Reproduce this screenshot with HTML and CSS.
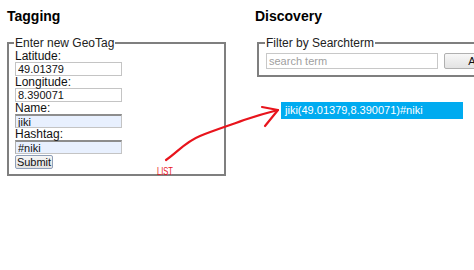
FILE: index.html
```html
<!DOCTYPE html>
<html lang="en">
<head>
    <meta charset="UTF-8">
    <title>GeoTag App</title>
    <link rel="stylesheet" href="styles.css">
</head>
<body>
    <div class="page">
        <section class="tagging">
            <h2>Tagging</h2>
            <fieldset class="tag-form">
                <legend>Enter new GeoTag</legend>
                <label for="lat">Latitude:</label>
                <input id="lat" class="field" type="text" value="49.01379">
                <label for="lon">Longitude:</label>
                <input id="lon" class="field" type="text" value="8.390071">
                <label for="name">Name:</label>
                <input id="name" class="field filled" type="text" value="jiki">
                <label for="tag">Hashtag:</label>
                <input id="tag" class="field filled" type="text" value="#niki">
                <button class="submit-btn" type="button">Submit</button>
            </fieldset>
        </section>

        <section class="discovery">
            <h2>Discovery</h2>
            <fieldset class="filter">
                <legend>Filter by Searchterm</legend>
                <div class="filter-row">
                    <input class="search" type="text" placeholder="search term">
                    <button class="apply-btn" type="button">Apply</button>
                </div>
            </fieldset>
            <ul class="results">
                <li>jiki(49.01379,8.390071)#niki</li>
            </ul>
        </section>
    </div>

    <!-- hand-drawn annotation -->
    <svg class="note" width="474" height="270" viewBox="0 0 474 270">
        <path d="M166 160 C178 152 185 142 200 136 C215 130 228 126 244 120 C256 116 266 113 278 110"
              fill="none" stroke="#e8141c" stroke-width="2.2" stroke-linecap="round"/>
        <path d="M262 107 L278 110 L265 126" fill="none" stroke="#e8141c" stroke-width="2.2"
              stroke-linecap="round" stroke-linejoin="round"/>
        <text x="157" y="175" textLength="16" lengthAdjust="spacingAndGlyphs" class="note-text">LIST</text>
    </svg>
</body>
</html>
```

FILE: styles.css
```css
body { font-family: "Liberation Sans", Arial, sans-serif; font-size: 12px; margin: 0; background: #fff; color: #000; overflow: hidden; }
.page { display: grid; grid-template-columns: 248px 1fr; padding-left: 7px; }
h2 { font-size: 14px; line-height: 18px; margin: 7px 0 11px; font-weight: bold; }

fieldset { border: 2px solid #7f7f7f; margin: 0; padding: 0 6px 5px 6px; min-width: 0; }
legend { font-size: 12px; line-height: 14px; padding: 0 1px; margin-left: -1px; color: #222; }

.tag-form { width: 219px; box-sizing: border-box; }
.tag-form label { display: block; line-height: 12px; height: 12px; color: #111; }
.field { display: block; box-sizing: border-box; width: 107px; height: 14px; margin: 0; padding: 0 2px; font: 11px "Liberation Sans", Arial, sans-serif; border: 1px solid #c4c4c4; background: #fff; color: #111; }
.field.filled { background: #e8f0fe; border-top: 2px solid #8d8d8d; border-left-color: #b0b0b0; }
.submit-btn { display: block; margin-top: 1px; height: 14px; width: 38px; padding: 0; font: 11px "Liberation Sans", Arial, sans-serif; line-height: 12px; background: linear-gradient(#f6f6f6, #e2e2e2); border: 1px solid #8f9fb8; border-radius: 2px; color: #111; }

.filter { width: 300px; margin-left: 2px; padding: 3px 8px 6px 7px; }
.filter-row { display: flex; gap: 6px; }
.search { flex: none; box-sizing: border-box; width: 172px; height: 16px; margin: 0; padding: 0 2px; font: 11px "Liberation Sans", Arial, sans-serif; border: 1px solid #c8c8c8; }
.search::placeholder { color: #a0a0a0; }
.apply-btn { flex: none; box-sizing: border-box; width: 76px; height: 16px; padding: 0; font: 11px "Liberation Sans", Arial, sans-serif; background: linear-gradient(#f7f7f7, #e3e3e3); border: 1px solid #b0b0b0; border-radius: 2px; color: #111; }

.results { list-style: none; margin: 25px 0 0 26px; padding: 0; }
.results li { width: 182px; height: 17px; box-sizing: border-box; background: #00abf0; color: #fff; font-size: 11px; line-height: 17px; padding-left: 4px; }

.note { position: absolute; left: 0; top: 0; pointer-events: none; }
.note-text { font-family: "Liberation Sans", Arial, sans-serif; font-size: 10px; fill: #e8141c; }
```
